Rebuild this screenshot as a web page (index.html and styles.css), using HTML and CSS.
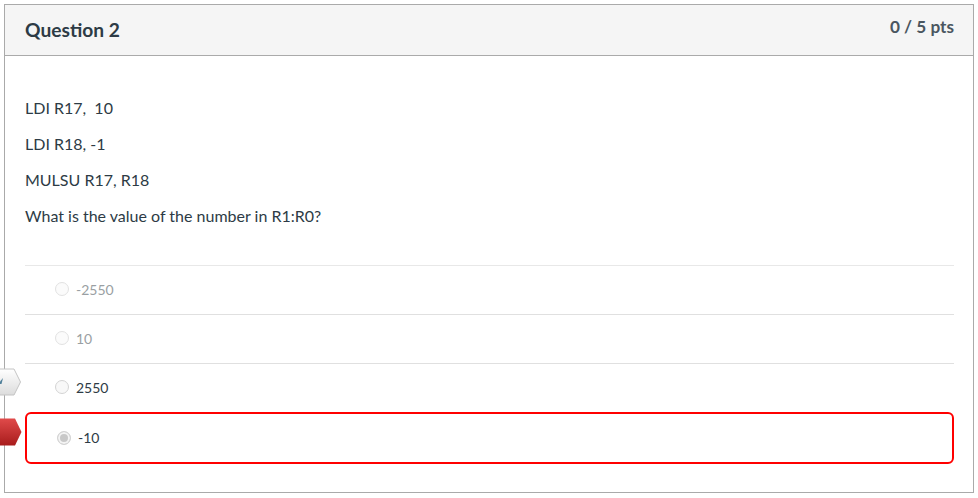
FILE: index.html
```html
<!DOCTYPE html>
<html lang="en">
<head>
    <meta charset="UTF-8">
    <title>Question 2</title>
    <link rel="stylesheet" href="styles.css">
</head>
<body>
    <div class="question">
        <div class="question-header">
            <h2>Question 2</h2>
            <span class="points">0 / 5 pts</span>
        </div>
        <div class="question-body">
            <div class="question-text">
                <p>LDI R17,&nbsp; 10</p>
                <p>LDI R18, -1</p>
                <p>MULSU R17, R18</p>
                <p>What is the value of the number in R1:R0?</p>
            </div>
            <div class="answers">
                <div class="answer faded">
                    <span class="radio"></span>
                    <span>-2550</span>
                </div>
                <div class="answer faded">
                    <span class="radio"></span>
                    <span>10</span>
                </div>
                <div class="answer correct">
                    <svg class="flag" width="22" height="28" viewBox="0 0 22 28">
                        <defs>
                            <linearGradient id="flag-white" x1="0" y1="0" x2="0" y2="1">
                                <stop offset="0" stop-color="#ffffff"/>
                                <stop offset="1" stop-color="#dcdcdc"/>
                            </linearGradient>
                        </defs>
                        <path d="M-2 1H14L20.500 14L14 27H-2Z" fill="url(#flag-white)" stroke="#c4c4c4"/>
                        <path d="M0 13.500L3 10L1.500 16L0 16Z" fill="#4f7f99"/>
                    </svg>
                    <span class="radio"></span>
                    <span>2550</span>
                </div>
                <div class="answer wrong">
                    <svg class="flag" width="22" height="28" viewBox="0 0 22 28">
                        <defs>
                            <linearGradient id="flag-red" x1="0" y1="0" x2="0" y2="1">
                                <stop offset="0" stop-color="#e04a4a"/>
                                <stop offset="1" stop-color="#a81c1c"/>
                            </linearGradient>
                        </defs>
                        <path d="M-2 0.500H15L21.500 14L15 27.500H-2Z" fill="url(#flag-red)"/>
                    </svg>
                    <span class="radio checked"></span>
                    <span>-10</span>
                </div>
            </div>
        </div>
    </div>
</body>
</html>
```

FILE: styles.css
```css
html, body {
    margin: 0;
    padding: 0;
}
body {
    font-family: Lato, "Open Sans", sans-serif;
    background: white;
    color: #2d3b45;
    padding: 4px 4px 0 4px;
    overflow: hidden;
}
.question {
    border: 1px solid #aaa;
    height: 489px;
    box-sizing: border-box;
}
.question-header {
    display: flex;
    justify-content: space-between;
    height: 50px;
    padding: 0 19px 0 20px;
    background: #f5f5f5;
    border-bottom: 1px solid #aaa;
}
.question-header h2 {
    margin: 0;
    padding-top: 13px;
    font-size: 19.2px;
    line-height: 23px;
    font-weight: bold;
}
.points {
    padding-top: 12px;
    font-size: 17.2px;
    line-height: 20px;
    font-weight: bold;
    color: #4a5660;
}
.question-body {
    padding: 40px 19px 0 20px;
}
.question-text p {
    margin: 0 0 12px;
    font-size: 16px;
    line-height: 24px;
}
.question-text {
    padding-bottom: 25px;
}
.answers {
    border-top: 1px solid #e8e8e8;
}
.answer {
    position: relative;
    display: flex;
    align-items: center;
    gap: 7px;
    height: 46px;
    padding: 0 0 2px 30px;
    font-size: 14px;
    border-bottom: 1px solid #e0e0e0;
}
.answer.faded {
    color: #9a9fa3;
}
.answer.correct {
    border-bottom: none;
}
.answer.wrong {
    height: 52px;
    padding: 0 0 1px 30px;
    border: 2px solid #f00;
    border-radius: 6px;
    box-sizing: border-box;
}
.radio {
    width: 12px;
    height: 12px;
    border: 1px solid #d4d4d4;
    border-radius: 50%;
    background: #f8f8f8;
    flex: none;
}
.answer.faded .radio {
    border-color: #e2e2e2;
    background: #fbfbfb;
}
.radio.checked {
    background: #c8c8c8;
    box-shadow: inset 0 0 0 2px #f4f4f4;
}
.flag {
    position: absolute;
    overflow: visible;
}
.answer.correct .flag {
    left: -25px;
    top: 4px;
}
.answer.wrong .flag {
    left: -27px;
    top: 4px;
}
```
